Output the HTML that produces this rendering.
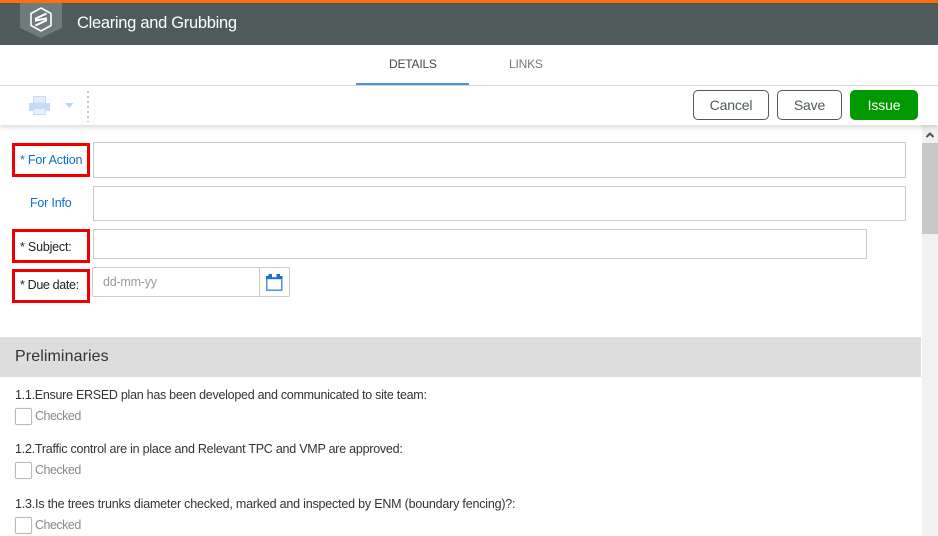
<!DOCTYPE html>
<html><head><meta charset="utf-8">
<style>
html,body{margin:0;padding:0;width:938px;height:536px;overflow:hidden;background:#fff;font-family:"Liberation Sans",sans-serif;}
.a{position:absolute;box-sizing:border-box;}
.t{position:absolute;white-space:nowrap;line-height:16px;}
.inp{position:absolute;box-sizing:border-box;border:1px solid #ccc;background:#fff;}
.red{position:absolute;box-sizing:border-box;border:3px solid #ee0000;left:12px;width:78px;}
.btn{position:absolute;box-sizing:border-box;top:90px;height:30px;border:1px solid #4f5a5b;border-radius:5px;color:#4f5a5b;font-size:14px;line-height:29px;text-align:center;background:#fff;letter-spacing:-.15px;}
.q{font-size:12.5px;color:#333;left:15px;}
.cb{position:absolute;box-sizing:border-box;left:15px;width:17px;height:17px;border:1px solid #bbb;border-radius:2px;background:#fff;box-shadow:0 0 1px #ccc;}
.ck{font-size:12.5px;color:#8a8a8a;left:35px;letter-spacing:-.5px;}
</style></head><body>
<div class="a" style="left:0;top:0;width:938px;height:3px;background:#ff6d0d"></div>
<div class="a" style="left:0;top:3px;width:938px;height:42px;background:#4f5a5b"></div>
<svg class="a" style="left:20px;top:3px" width="42" height="36" viewBox="0 0 42 36">
<path d="M0 0H42V25L21 35L0 25Z" fill="#6f7a7a"/>
<path d="M21 5L31 10.500V22.500L21 28L11 22.500V10.500Z" fill="none" stroke="#fff" stroke-width="1.600"/>
<path d="M26.500 10.500L16 15.500V17.500L26 15.500V17.500L15.500 22.500" fill="none" stroke="#fff" stroke-width="2"/>
</svg>
<div class="t" style="left:77px;top:15px;font-size:16.5px;color:#fff;letter-spacing:-.3px">Clearing and Grubbing</div>

<div class="a" style="left:0;top:85px;width:938px;height:1px;background:#ddd"></div>
<div class="a" style="left:356px;top:83px;width:113px;height:2px;background:#4f94e0"></div>
<div class="t" style="left:389px;top:56px;font-size:12px;color:#444;letter-spacing:-.2px">DETAILS</div>
<div class="t" style="left:509px;top:56px;font-size:12px;color:#777;letter-spacing:-.2px">LINKS</div>

<div class="a" style="left:0;top:86px;width:938px;height:39px;background:#fff;box-shadow:0 2px 5px rgba(0,0,0,.16);z-index:2"></div>
<svg class="a" style="left:29px;top:96px;z-index:3" width="46" height="20" viewBox="0 0 46 20">
<path d="M4.500 .5H16.500V7H4.500Z" fill="#e3eefa" stroke="#c6dcf5"/>
<path d="M0 7H21V15H17V12H4V15H0Z" fill="#c6dcf5"/>
<path d="M4.500 12.500H16.500V18.500H4.500Z" fill="#e6f0fb" stroke="#c6dcf5"/>
<path d="M36 7H44.500L40.200 12Z" fill="#bcd6f2"/>
</svg>
<div class="a" style="left:87px;top:91px;width:2px;height:31px;background:repeating-linear-gradient(#c4c4c4 0,#c4c4c4 2px,transparent 2px,transparent 5px);z-index:3"></div>
<div class="btn" style="left:693px;width:76px;z-index:3">Cancel</div>
<div class="btn" style="left:777px;width:65px;z-index:3">Save</div>
<div class="btn" style="left:850px;width:68px;background:#009a00;border-color:#009a00;color:#fff;z-index:3">Issue</div>

<div class="a" style="left:922px;top:125px;width:16px;height:411px;background:#f1f1f1"></div>
<div class="a" style="left:922px;top:143px;width:16px;height:91px;background:#c8c8c8"></div>
<svg class="a" style="left:922px;top:128px" width="16" height="14" viewBox="0 0 16 14"><path d="M4.500 9L8 5.500L11.500 9" fill="none" stroke="#505050" stroke-width="2"/></svg>

<div class="inp" style="left:93px;top:142px;width:813px;height:36px"></div>
<div class="inp" style="left:93px;top:186px;width:813px;height:35px"></div>
<div class="inp" style="left:93px;top:229px;width:774px;height:30px"></div>
<div class="inp" style="left:92px;top:267px;width:198px;height:30px;border-radius:2px"></div>
<div class="a" style="left:259px;top:267px;width:1px;height:30px;background:#ccc"></div>
<svg class="a" style="left:266px;top:274px" width="17" height="17" viewBox="0 0 17 17">
<rect x=".75" y="3" width="15" height="13.200" fill="#fff" stroke="#4f94e0" stroke-width="1.500"/>
<rect x="0" y="2" width="16.500" height="3.200" fill="#1a6fd0"/>
<rect x="2.500" y="0" width="3.500" height="3" fill="#1a6fd0"/><rect x="10.500" y="0" width="3.500" height="3" fill="#1a6fd0"/>
<rect x="6" y="2" width="4.500" height="1.200" fill="#fff"/>
</svg>
<div class="t" style="left:103px;top:274px;font-size:12.500px;color:#999;letter-spacing:-.22px">dd-mm-yy</div>

<div class="red" style="top:143px;height:34px"></div>
<div class="red" style="top:229px;height:34px"></div>
<div class="red" style="top:269px;height:34px"></div>
<div class="t" style="left:20px;top:152px;font-size:12.500px;color:#0f6fcf;letter-spacing:-.2px">* For Action</div>
<div class="t" style="left:30px;top:195px;font-size:12.500px;color:#0f6fcf;letter-spacing:-.2px">For Info</div>
<div class="t" style="left:20px;top:239px;font-size:12.500px;color:#222;letter-spacing:-.2px">* Subject:</div>
<div class="t" style="left:20px;top:277px;font-size:12.500px;color:#222;letter-spacing:-.35px">* Due date:</div>

<div class="a" style="left:0;top:337px;width:921px;height:40px;background:#ddd"></div>
<div class="t" style="left:15px;top:349px;font-size:16px;color:#333;letter-spacing:.1px">Preliminaries</div>

<div class="t q" style="top:387px;letter-spacing:-.27px">1.1.Ensure ERSED plan has been developed and communicated to site team:</div>
<div class="cb" style="top:408px"></div>
<div class="t ck" style="top:408px">Checked</div>
<div class="t q" style="top:441px;letter-spacing:-.24px">1.2.Traffic control are in place and Relevant TPC and VMP are approved:</div>
<div class="cb" style="top:462px"></div>
<div class="t ck" style="top:462px">Checked</div>
<div class="t q" style="top:496px;letter-spacing:-.2px">1.3.Is the trees trunks diameter checked, marked and inspected by ENM (boundary fencing)?:</div>
<div class="cb" style="top:517px"></div>
<div class="t ck" style="top:517px">Checked</div>
</body></html>
